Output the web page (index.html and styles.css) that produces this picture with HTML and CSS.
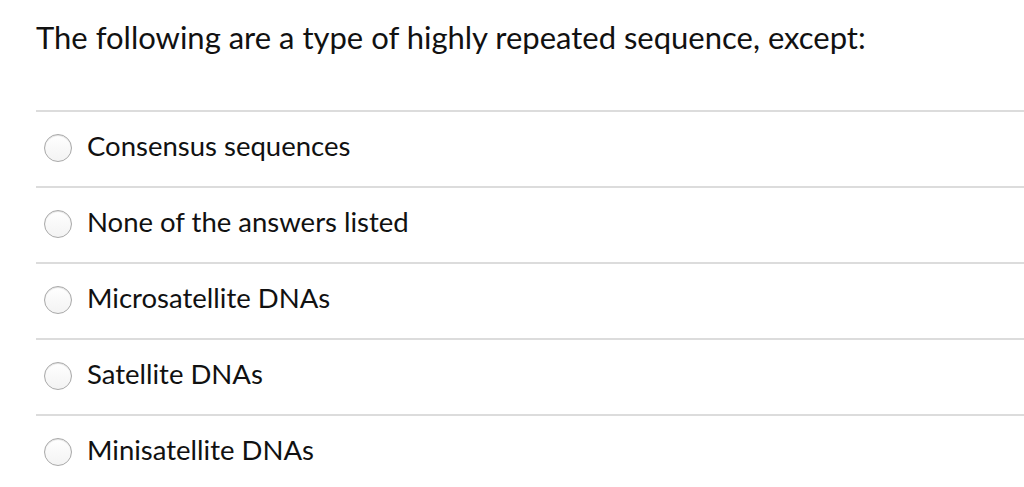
FILE: index.html
```html
<!DOCTYPE html>
<html>
<head>
<meta charset="utf-8">
<link rel="stylesheet" href="styles.css">
</head>
<body>
<div class="question">
  <h1 class="prompt">The following are a type of highly repeated sequence, except:</h1>
  <ul class="answers">
    <li class="answer"><span class="radio"></span><span class="label">Consensus sequences</span></li>
    <li class="answer"><span class="radio"></span><span class="label">None of the answers listed</span></li>
    <li class="answer"><span class="radio"></span><span class="label">Microsatellite DNAs</span></li>
    <li class="answer"><span class="radio"></span><span class="label">Satellite DNAs</span></li>
    <li class="answer"><span class="radio"></span><span class="label">Minisatellite DNAs</span></li>
  </ul>
</div>
</body>
</html>
```
FILE: styles.css
```css
html, body {
  margin: 0;
  padding: 0;
  background: #ffffff;
}
body {
  font-family: Lato, "Open Sans", sans-serif;
  color: #111111;
  overflow: hidden;
}
.question {
  padding-left: 36px;
}
.prompt {
  margin: 0;
  padding-top: 17px;
  height: 110px;
  box-sizing: border-box;
  font-size: 31px;
  font-weight: 400;
  line-height: 40px;
}
.answers {
  list-style: none;
  margin: 0;
  padding: 0;
}
.answer {
  display: flex;
  align-items: center;
  height: 76px;
  box-sizing: border-box;
  border-top: 2px solid #dcdcdc;
  padding-left: 8px;
  padding-bottom: 2px;
}
.radio {
  width: 28px;
  height: 28px;
  box-sizing: border-box;
  border-radius: 50%;
  border: 1px solid #a9a9a9;
  background: linear-gradient(#ffffff, #f3f3f3);
  box-shadow: inset 0 1px 1px rgba(0,0,0,0.12);
  flex: none;
}
.label {
  margin-left: 15px;
  margin-bottom: 4px;
  font-size: 27.5px;
  line-height: 32px;
}
```
